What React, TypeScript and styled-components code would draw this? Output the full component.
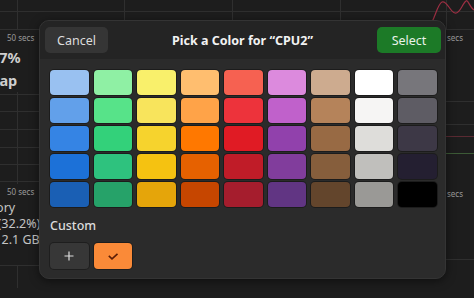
import styled, { createGlobalStyle } from "styled-components";

const GlobalStyle = createGlobalStyle`
  html, body {
    margin: 0;
    padding: 0;
    background: #1c1c1c;
  }
  body {
    font-family: "Noto Sans", "DejaVu Sans", sans-serif;
  }
`;

const PALETTE = [
  ["#99c1f1", "#62a0ea", "#3584e4", "#1c71d8", "#1a5fb4"],
  ["#8ff0a4", "#57e389", "#33d17a", "#2ec27e", "#26a269"],
  ["#f9f06b", "#f8e45c", "#f6d32d", "#f5c211", "#e5a50a"],
  ["#ffbe6f", "#ffa348", "#ff7800", "#e66100", "#c64600"],
  ["#f66151", "#ed333b", "#e01b24", "#c01c28", "#a51d2d"],
  ["#dc8add", "#c061cb", "#9141ac", "#813d9c", "#613583"],
  ["#cdab8f", "#b5835a", "#986a44", "#865e3c", "#63452c"],
  ["#ffffff", "#f6f5f4", "#deddda", "#c0bfbc", "#9a9996"],
  ["#77767b", "#5e5c64", "#3d3846", "#241f31", "#000000"],
];

const Page = styled.div`
  position: relative;
  width: 474px;
  height: 298px;
  overflow: hidden;
  background: #1d1d1d;
`;

/* --- dimmed system monitor behind the dialog --- */

const Backdrop = styled.div`
  display: flex;
  flex-direction: column;
  height: 100%;
`;

const Panes = styled.div`
  flex: 1;
  display: grid;
  grid-template-columns: 40px 1fr 28px;
`;

const Pane = styled.div`
  display: flex;
  flex-direction: column;
  overflow: hidden;
`;

const AxisLabel = styled.div<{ $indent?: number }>`
  height: 16px;
  line-height: 16px;
  padding-left: ${(p) => p.$indent ?? 7}px;
  font-size: 8px;
  color: #9a9a9a;
  white-space: nowrap;
`;

const BigValue = styled.div<{ $shift: number }>`
  margin-left: ${(p) => p.$shift}px;
  height: 23px;
  line-height: 23px;
  font-size: 14.5px;
  font-weight: 700;
  color: #cfcfcf;
  white-space: nowrap;
`;

const Caption = styled.div<{ $shift: number }>`
  margin-left: ${(p) => p.$shift}px;
  height: 16px;
  line-height: 16px;
  font-size: 12.5px;
  color: #c4c4c4;
  white-space: nowrap;
`;

const Chart = styled.svg<{ $h: number }>`
  display: block;
  flex: none;
  height: ${(p) => p.$h}px;
  width: 100%;
`;

const GRID = "#2f2f2f";

/* --- dialog --- */

const Dialog = styled.div`
  position: absolute;
  left: 39px;
  top: 20px;
  width: 407px;
  height: 259px;
  box-sizing: border-box;
  border-radius: 10px;
  background: #2b2b2b;
  border: 1px solid #343434;
  box-shadow: 0 2px 10px rgba(0, 0, 0, 0.5);
  overflow: hidden;
  display: flex;
  flex-direction: column;
`;

const HeaderBar = styled.div`
  height: 38px;
  flex: none;
  background: #242424;
  display: grid;
  grid-template-columns: auto 1fr auto;
  align-items: center;
  padding: 0 4px 0 5px;
`;

const HeaderButton = styled.button<{ $suggested?: boolean }>`
  height: 26px;
  width: ${(p) => (p.$suggested ? 64 : 63)}px;
  border: none;
  border-radius: 5px;
  background: ${(p) => (p.$suggested ? "#1c7a27" : "#353535")};
  color: ${(p) => (p.$suggested ? "#e9f3ea" : "#dedede")};
  font-family: inherit;
  font-size: 12.5px;
  padding: 0;
`;

const Title = styled.div`
  text-align: center;
  color: #f2f2f2;
  font-size: 12.5px;
  font-weight: 700;
`;

const Body = styled.div`
  padding: 11px 9px 10px 10px;
  display: flex;
  flex-direction: column;
`;

const SwatchGrid = styled.div`
  display: grid;
  grid-template-columns: repeat(9, 38.5px);
  grid-template-rows: repeat(5, 25px);
  grid-auto-flow: column;
  column-gap: 5px;
  row-gap: 3px;
`;

const Swatch = styled.div<{ $color: string }>`
  background: ${(p) => p.$color};
  border-radius: 4px;
  box-shadow: 0 0 0 1px rgba(0, 0, 0, 0.35);
`;

const SectionLabel = styled.div`
  margin-top: 11px;
  height: 16px;
  line-height: 16px;
  font-size: 12.5px;
  font-weight: 500;
  color: #dcdcdc;
`;

const CustomRow = styled.div`
  margin-top: 9px;
  display: flex;
  gap: 5px;
`;

const CustomButton = styled.div<{ $color: string }>`
  width: 38.5px;
  height: 26px;
  border-radius: 4px;
  background: ${(p) => p.$color};
  display: flex;
  align-items: center;
  justify-content: center;
  box-shadow: 0 0 0 1px rgba(0, 0, 0, 0.3);
`;

const vLines = (xs: number[], y1: number, y2: number) =>
  xs.map((x) => <line key={x} x1={x + 0.5} x2={x + 0.5} y1={y1} y2={y2} stroke={GRID} />);
const hLines = (ys: number[], w: number, color = GRID) =>
  ys.map((y) => <line key={y} x1={0} x2={w} y1={y + 0.5} y2={y + 0.5} stroke={color} />);

export default function App() {
  return (
    <>
      <GlobalStyle />
      <Page>
        <Backdrop>
          <Chart $h={30} viewBox="0 0 474 30">
            {hLines([11, 29], 474)}
            {vLines([17, 124, 232, 340, 446], 0, 30)}
            <path
              d="M432 22 C436 14, 438 4, 442 2 C447 0, 450 12, 455 13 C460 14, 462 4, 466 1 C468 -1, 470 8, 474 10"
              fill="none"
              stroke="#9c2f43"
              strokeWidth={1.2}
            />
          </Chart>
          <Panes>
            <Pane>
              <AxisLabel>50 secs</AxisLabel>
              <BigValue $shift={-9}>77%</BigValue>
              <BigValue $shift={-21}>Swap</BigValue>
              <Chart $h={92} viewBox="0 0 40 92">
                {hLines([2, 19, 37, 55, 72, 89], 40)}
                {vLines([17], 0, 92)}
              </Chart>
              <AxisLabel>50 secs</AxisLabel>
              <Caption $shift={-34}>Memory</Caption>
              <Caption $shift={-9}>: (32.2%)</Caption>
              <Caption $shift={-5}>: 2.1 GB</Caption>
              <Chart $h={40} viewBox="0 0 40 40">
                {hLines([17], 40)}
                {vLines([17], 17, 40)}
              </Chart>
            </Pane>
            <div />
            <Pane>
              <AxisLabel $indent={1}>secs</AxisLabel>
              <Chart $h={140} viewBox="0 0 28 140">
                {hLines([55, 78], 28)}
                {hLines([90], 28, "#5a2a32")}
                {hLines([107], 28, "#3c5a36")}
              </Chart>
              <AxisLabel $indent={1}>secs</AxisLabel>
              <Chart $h={80} viewBox="0 0 28 80">
                {hLines([57], 28)}
              </Chart>
            </Pane>
          </Panes>
        </Backdrop>

        <Dialog>
          <HeaderBar>
            <HeaderButton>Cancel</HeaderButton>
            <Title>Pick a Color for “CPU2”</Title>
            <HeaderButton $suggested>Select</HeaderButton>
          </HeaderBar>
          <Body>
            <SwatchGrid>
              {PALETTE.flatMap((col) => col.map((c) => <Swatch key={c} $color={c} />))}
            </SwatchGrid>
            <SectionLabel>Custom</SectionLabel>
            <CustomRow>
              <CustomButton $color="#373737">
                <svg width="12" height="12" viewBox="0 0 12 12">
                  <path d="M6 1.5v9M1.5 6h9" stroke="#dedede" strokeWidth="1.2" />
                </svg>
              </CustomButton>
              <CustomButton $color="#fa8a38">
                <svg width="12" height="9" viewBox="0 0 12 9">
                  <path d="M1.8 3.8L5 6.8L10.5 1.8" fill="none" stroke="#5a1d06" strokeWidth="1.6" />
                </svg>
              </CustomButton>
            </CustomRow>
          </Body>
        </Dialog>
      </Page>
    </>
  );
}
